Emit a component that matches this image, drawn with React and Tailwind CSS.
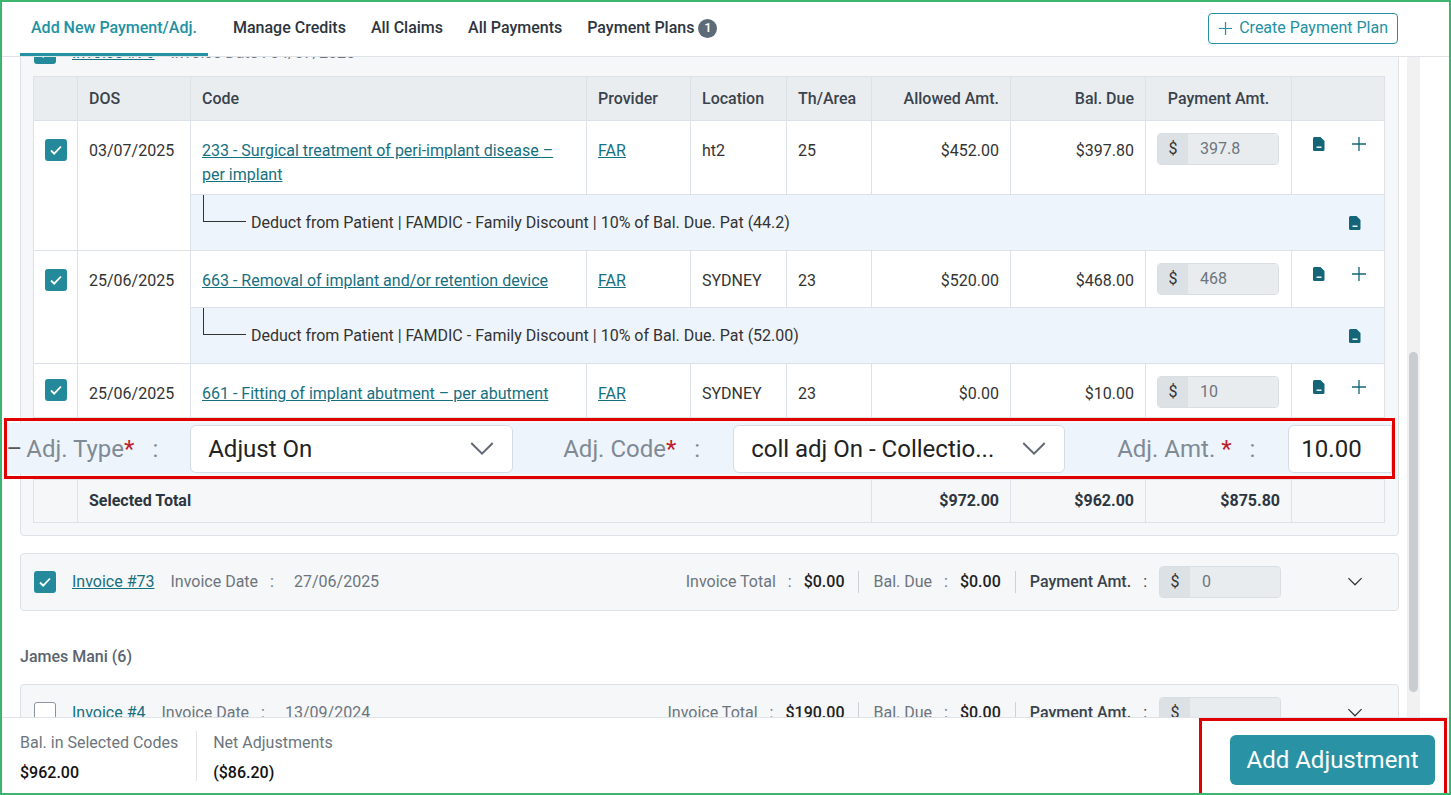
import React from "react";

const F = { fontFamily: "Roboto, 'Liberation Sans', sans-serif" };

function Check({ on = true }) {
  return on ? (
    <div className="w-[22px] h-[22px] rounded-[3px] bg-[#24899a] flex items-center justify-center">
      <svg width="16" height="16" viewBox="0 0 16 16" fill="none" stroke="white" strokeWidth="1.8"><path d="M3 8.5l3.2 3.2L13 4.5" /></svg>
    </div>
  ) : (
    <div className="w-[22px] h-[22px] rounded-[3px] border border-[#8c959f] bg-white" />
  );
}

function DocIcon() {
  return (
    <svg width="12" height="14" viewBox="0 0 12 14"><path d="M1.5 0h6l4 4v8.5a1.5 1.5 0 0 1-1.5 1.5h-8.5A1.5 1.5 0 0 1 0 12.5v-11A1.5 1.5 0 0 1 1.5 0z" fill="#136577" /><rect x="3.5" y="9.5" width="5" height="1.4" fill="white" /></svg>
  );
}

function Plus({ c = "#136577", s = 16 }) {
  return <svg width={s} height={s} viewBox="0 0 16 16" stroke={c} strokeWidth="1.3"><path d="M8 1v14M1 8h14" /></svg>;
}

function Chevron({ s = 26, c = "#5f6873" }) {
  return <svg width={s} height={s * 0.6} viewBox="0 0 26 16" fill="none" stroke={c} strokeWidth="2"><path d="M2 2l11 11L24 2" /></svg>;
}

function Pay({ v }) {
  return (
    <div className="flex w-[122px] h-[32px] rounded-[4px] overflow-hidden border border-[#d9dee3]">
      <div className="w-[30px] bg-[#dce1e6] flex items-center justify-center text-[#333] text-[16px]">$</div>
      <div className="flex-1 bg-[#e9ecef] flex items-center pl-[12px] text-[#6c757d] text-[16px]">{v}</div>
    </div>
  );
}

const td = "border border-[#dde2e8] px-[11px] text-[16px] text-[#333] align-top";

function Actions() {
  return <div className="flex items-center justify-between pl-[10px] pr-[6px]"><DocIcon /><Plus /></div>;
}

function MainRow({ dos, code, loc, th, allowed, bal, pay, h }) {
  return (
    <tr className={`bg-white ${h}`}>
      <td className={`${td} pt-[18px]`} rowSpan={2}><Check /></td>
      <td className={`${td} pt-[18px]`} rowSpan={2}>{dos}</td>
      <td className={`${td} pt-[18px]`}><span className="underline text-[#16707f] leading-[22px]">{code}</span></td>
      <td className={`${td} pt-[18px]`}><span className="underline text-[#16707f]">FAR</span></td>
      <td className={`${td} pt-[18px]`}>{loc}</td>
      <td className={`${td} pt-[18px]`}>{th}</td>
      <td className={`${td} pt-[18px] text-right`}>{allowed}</td>
      <td className={`${td} pt-[18px] text-right`}>{bal}</td>
      <td className={`${td} pt-[12px]`}><Pay v={pay} /></td>
      <td className={`${td} pt-[15px]`}><Actions /></td>
    </tr>
  );
}

function SubRow({ text }) {
  return (
    <tr className="bg-[#eef4fc] h-[56px]">
      <td className="border border-[#dde2e8] p-0 relative" colSpan={8}>
        <div className="absolute left-[12px] top-0 w-[43px] h-[27px] border-l border-b border-[#333]" />
        <div className="flex items-center justify-between pl-[60px] pr-[23px] text-[16px] text-[#333]">
          <span>{text}</span><DocIcon />
        </div>
      </td>
    </tr>
  );
}

function Sep() {
  return <span className="mx-[14px] h-[22px] border-l border-[#ccd2d8]" />;
}

export default function App() {
  return (
    <div style={F} className="w-[1451px] h-[795px] border-2 border-[#3db56e] bg-white flex flex-col overflow-hidden">
      <div className="h-[55px] flex items-stretch border-b border-[#dfe3e8] shrink-0 pl-[18px] pr-[51px]">
        <div className="flex items-end gap-[25px] flex-1">
          <div className="border-b-[3px] border-[#2391a3] pb-[13px] px-[11px] text-[16px] font-medium text-[#2391a3]">Add New Payment/Adj.</div>
          {["Manage Credits", "All Claims", "All Payments"].map(t => (
            <div key={t} className="pb-[16px] text-[16px] font-medium text-[#2d3640]">{t}</div>
          ))}
          <div className="pb-[16px] text-[16px] font-medium text-[#2d3640] flex items-center gap-[4px]">Payment Plans
            <span className="w-[19px] h-[19px] rounded-full bg-[#5d6b78] text-white text-[13px] flex items-center justify-center">1</span>
          </div>
        </div>
        <div className="flex items-center">
          <div className="h-[31px] px-[9px] border border-[#2391a3] rounded-[4px] flex items-center gap-[6px] text-[#2391a3] text-[16px] mt-[-2px]">
            <Plus c="#2391a3" s={15} />Create Payment Plan
          </div>
        </div>
      </div>

      <div className="flex-1 flex overflow-hidden">
        <div className="flex-1 overflow-hidden pl-[18px] pr-[8px]">
          <div className="mt-[-29px]">
            <div className="bg-[#f6f7f9] border border-[#dde2e8] rounded-[4px] px-[12px] pb-[12px]">
              <div className="h-[47px] flex items-center gap-[16px] text-[16px] text-[#6c757d] pl-[1px]">
                <Check /><span className="underline text-[#16707f]">Invoice #76</span><span>Invoice Date : 04/07/2025</span>
              </div>
              <table className="w-[1351px] border-collapse table-fixed">
                <colgroup>
                  {[44, 113, 396, 104, 96, 85, 139, 135, 146, 93].map((w, i) => <col key={i} style={{ width: w }} />)}
                </colgroup>
                <thead>
                  <tr className="h-[44px] bg-[#eaedf0] text-[16px] text-[#3a434c] font-medium">
                    <th className="border border-[#dde2e8]"></th>
                    <th className="border border-[#dde2e8] text-left px-[11px] font-medium">DOS</th>
                    <th className="border border-[#dde2e8] text-left px-[11px] font-medium">Code</th>
                    <th className="border border-[#dde2e8] text-left px-[11px] font-medium">Provider</th>
                    <th className="border border-[#dde2e8] text-left px-[11px] font-medium">Location</th>
                    <th className="border border-[#dde2e8] text-left px-[11px] font-medium">Th/Area</th>
                    <th className="border border-[#dde2e8] text-right px-[11px] font-medium">Allowed Amt.</th>
                    <th className="border border-[#dde2e8] text-right px-[11px] font-medium">Bal. Due</th>
                    <th className="border border-[#dde2e8] text-center px-[11px] font-medium">Payment Amt.</th>
                    <th className="border border-[#dde2e8]"></th>
                  </tr>
                </thead>
                <tbody>
                  <MainRow h="h-[74px]" dos="03/07/2025" code="233 - Surgical treatment of peri-implant disease – per implant" loc="ht2" th="25" allowed="$452.00" bal="$397.80" pay="397.8" />
                  <SubRow text="Deduct from Patient | FAMDIC - Family Discount | 10% of Bal. Due. Pat (44.2)" />
                  <MainRow h="h-[57px]" dos="25/06/2025" code="663 - Removal of implant and/or retention device" loc="SYDNEY" th="23" allowed="$520.00" bal="$468.00" pay="468" />
                  <SubRow text="Deduct from Patient | FAMDIC - Family Discount | 10% of Bal. Due. Pat (52.00)" />
                  <tr className="bg-white h-[54px]">
                    <td className={`${td} pt-[15px]`}><Check /></td>
                    <td className={`${td} pt-[18px]`}>25/06/2025</td>
                    <td className={`${td} pt-[18px]`}><span className="underline text-[#16707f]">661 - Fitting of implant abutment – per abutment</span></td>
                    <td className={`${td} pt-[18px]`}><span className="underline text-[#16707f]">FAR</span></td>
                    <td className={`${td} pt-[18px]`}>SYDNEY</td>
                    <td className={`${td} pt-[18px]`}>23</td>
                    <td className={`${td} pt-[18px] text-right`}>$0.00</td>
                    <td className={`${td} pt-[18px] text-right`}>$10.00</td>
                    <td className={`${td} pt-[12px]`}><Pay v="10" /></td>
                    <td className={`${td} pt-[15px]`}><Actions /></td>
                  </tr>
                  <tr>
                    <td colSpan={10} className="p-0 h-[61px]">
                      <div className="ml-[-30px] w-[1391px] h-[61px] border-[3px] border-[#e00000] flex items-center">
                        <div className="w-full h-[51px] bg-[#eef4fc] flex items-center text-[24px] text-[#7f8a94]">
                          <span className="text-[#555]">–</span>
                          <span className="ml-[4px]">Adj. Type<span className="text-[#c0202a]">*</span></span>
                          <span className="ml-[18px]">:</span>
                          <div className="ml-[32px] w-[323px] h-[48px] bg-white border border-[#d6dce2] rounded-[6px] flex items-center justify-between pl-[17px] pr-[17px] text-[#222]">Adjust On<Chevron /></div>
                          <span className="ml-[50px]">Adj. Code<span className="text-[#c0202a]">*</span></span>
                          <span className="ml-[18px]">:</span>
                          <div className="ml-[33px] w-[332px] h-[48px] bg-white border border-[#d6dce2] rounded-[6px] flex items-center justify-between pl-[17px] pr-[17px] text-[#222]">coll adj On - Collectio...<Chevron /></div>
                          <span className="ml-[52px]">Adj. Amt. <span className="text-[#c0202a]">*</span></span>
                          <span className="ml-[18px]">:</span>
                          <div className="ml-[33px] flex-1 h-[48px] bg-white border border-[#d6dce2] rounded-l-[6px] flex items-center pl-[12px] text-[#222]">10.00</div>
                        </div>
                      </div>
                    </td>
                  </tr>
                  <tr className="h-[43px] bg-[#f6f7f9] text-[16px] font-bold text-[#2d3640]">
                    <td className="border border-[#dde2e8]"></td>
                    <td className="border border-[#dde2e8] px-[11px] border-r-0" colSpan={5}>Selected Total</td>
                    <td className="border border-[#dde2e8] px-[11px] text-right">$972.00</td>
                    <td className="border border-[#dde2e8] px-[11px] text-right">$962.00</td>
                    <td className="border border-[#dde2e8] px-[11px] text-right">$875.80</td>
                    <td className="border border-[#dde2e8]"></td>
                  </tr>
                </tbody>
              </table>
            </div>

            <div className="mt-[17px] h-[58px] bg-[#f6f7f9] border border-[#dde2e8] rounded-[4px] flex items-center pl-[13px] pr-[35px] text-[16px] text-[#6c757d]">
              <Check /><span className="ml-[16px] underline text-[#16707f]">Invoice #73</span>
              <span className="ml-[16px]">Invoice Date</span><span className="ml-[12px]">:</span><span className="ml-[20px]">27/06/2025</span>
              <div className="flex-1" />
              <span>Invoice Total</span><span className="ml-[12px]">:</span><span className="ml-[12px] text-[#222] font-medium">$0.00</span>
              <Sep />
              <span>Bal. Due</span><span className="ml-[12px]">:</span><span className="ml-[12px] text-[#222] font-medium">$0.00</span>
              <Sep />
              <span className="text-[#3a434c] font-medium">Payment Amt.</span><span className="ml-[12px] text-[#3a434c]">:</span>
              <div className="ml-[12px]"><Pay v="0" /></div>
              <div className="ml-[66px]"><Chevron s={16} c="#333" /></div>
            </div>

            <div className="mt-[34px] text-[16px] font-medium text-[#5a646e]">James Mani (6)</div>

            <div className="mt-[15px] h-[58px] bg-[#f6f7f9] border border-[#dde2e8] rounded-[4px] flex items-center pl-[13px] pr-[35px] text-[16px] text-[#6c757d]">
              <Check on={false} /><span className="ml-[16px] underline text-[#16707f]">Invoice #4</span>
              <span className="ml-[16px]">Invoice Date</span><span className="ml-[12px]">:</span><span className="ml-[20px]">13/09/2024</span>
              <div className="flex-1" />
              <span>Invoice Total</span><span className="ml-[12px]">:</span><span className="ml-[12px] text-[#222] font-medium">$190.00</span>
              <Sep />
              <span>Bal. Due</span><span className="ml-[12px]">:</span><span className="ml-[12px] text-[#222] font-medium">$0.00</span>
              <Sep />
              <span className="text-[#3a434c] font-medium">Payment Amt.</span><span className="ml-[12px] text-[#3a434c]">:</span>
              <div className="ml-[12px]"><Pay v="" /></div>
              <div className="ml-[66px]"><Chevron s={16} c="#333" /></div>
            </div>
          </div>
        </div>
        <div className="w-[13px] bg-[#f1f1f1] mr-[29px] flex flex-col pt-[295px]">
          <div className="h-[340px] mx-[2px] rounded-full bg-[#c9cdd1]" />
        </div>
      </div>

      <div className="h-[76px] shrink-0 border-t border-[#dfe3e8] bg-white flex items-center pl-[18px] pr-[2px]">
        <div className="pr-[18px] border-r border-[#dfe3e8] h-[50px]">
          <div className="text-[16px] text-[#6c757d]">Bal. in Selected Codes</div>
          <div className="mt-[6px] text-[16px] font-medium text-[#111]">$962.00</div>
        </div>
        <div className="pl-[16px] h-[50px]">
          <div className="text-[16px] text-[#6c757d]">Net Adjustments</div>
          <div className="mt-[6px] text-[16px] font-medium text-[#111]">($86.20)</div>
        </div>
        <div className="flex-1" />
        <div className="w-[248px] h-[83px] mb-[-8px] border-[3px] border-[#e00000] flex items-center justify-end pr-[9px]">
          <div className="w-[205px] h-[50px] bg-[#2993a5] rounded-[6px] text-white text-[24px] flex items-center justify-center">Add Adjustment</div>
        </div>
      </div>
    </div>
  );
}
